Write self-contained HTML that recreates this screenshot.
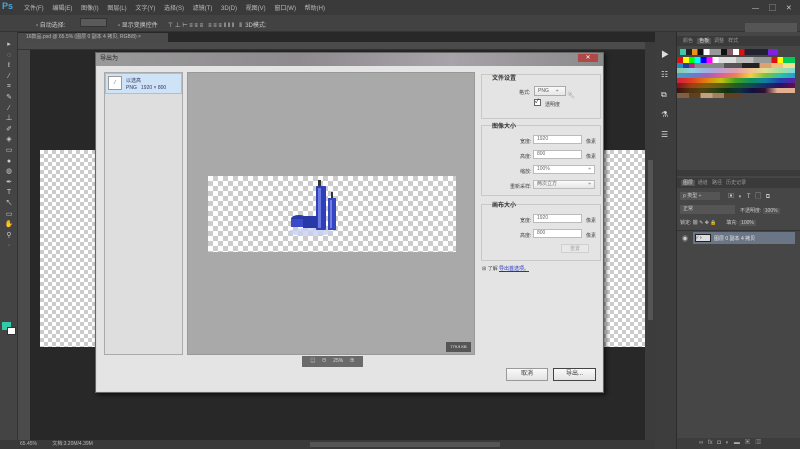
<!DOCTYPE html>
<html><head><meta charset="utf-8"><style>
*{margin:0;padding:0;box-sizing:border-box}
body{width:800px;height:449px;overflow:hidden;background:#282828;font-family:"Liberation Sans","Noto Sans CJK SC",sans-serif;font-size:6px;color:#ccc;position:relative}
.a{position:absolute}
.chk{background-color:#fff;background-image:linear-gradient(45deg,#ccc 25%,transparent 25%,transparent 75%,#ccc 75%),linear-gradient(45deg,#ccc 25%,transparent 25%,transparent 75%,#ccc 75%);background-size:8px 8px;background-position:0 0,4px 4px}
.inp{position:absolute;background:#fff;border:1px solid #bbb;height:9px;font-size:5px;color:#666;padding-left:3px;line-height:7px}
.lbl{position:absolute;font-size:5px;color:#444}
.grp{position:absolute;border:1px solid #c8c8c8;background:#e4e4e4}
.gt{position:absolute;font-size:6px;color:#333;font-weight:bold}
.btn{position:absolute;background:linear-gradient(#fafafa,#e2e2e2);border:1px solid #999;font-size:6px;color:#333;text-align:center;line-height:11px}
</style></head><body>
<!-- menu bar -->
<div class="a" style="left:0;top:0;width:800px;height:15px;background:#3a3a3a"></div>
<div class="a" style="left:2px;top:1px;font-size:9px;color:#4aa3df;font-weight:bold">Ps</div>
<div class="a" style="left:24px;top:3px;font-size:6px;color:#bbb;word-spacing:7px">文件(F) 编辑(E) 图像(I) 图层(L) 文字(Y) 选择(S) 滤镜(T) 3D(D) 视图(V) 窗口(W) 帮助(H)</div>
<div class="a" style="left:752px;top:3px;font-size:7px;color:#ccc;word-spacing:8px">— ▢ ✕</div>
<!-- options bar -->
<div class="a" style="left:0;top:15px;width:800px;height:17px;background:#424242;border-bottom:1px solid #333"></div>
<div class="a" style="left:36px;top:20px;font-size:6px;color:#ccc">▫ 自动选择:</div>
<div class="a" style="left:80px;top:18px;width:27px;height:9px;background:#5a5a5a;border:1px solid #333"></div>
<div class="a" style="left:118px;top:20px;font-size:6px;color:#ccc">▫ 显示变换控件 &nbsp;&nbsp;&nbsp;&nbsp; ⊤ ⊥ ⊢ ≡ ≡ ≡ &nbsp; ≡ ≡ ≡ ‖ ‖ ‖ &nbsp; ⫴ &nbsp;3D模式:</div>
<div class="a" style="left:745px;top:23px;width:52px;height:9px;background:#555"></div>
<!-- tab & ruler -->
<div class="a" style="left:18px;top:33px;width:150px;height:9px;background:#4a4a4a;font-size:5px;color:#bbb;padding-left:8px;line-height:9px">16款品.psd @ 65.5% (图层 0 副本 4 拷贝, RGB/8) ×</div>
<div class="a" style="left:18px;top:42px;width:627px;height:8px;background:#4b4b4b;border-bottom:1px solid #333"></div>
<div class="a" style="left:18px;top:50px;width:12px;height:390px;background:#4b4b4b"></div>
<!-- left toolbar -->
<div class="a" style="left:0;top:32px;width:18px;height:408px;background:#444;border-right:1px solid #333"></div>
<div class="a" style="left:4px;top:40px;width:10px;line-height:10.6px;font-size:7px;color:#ccc;text-align:center">▸<br>◌<br>ℓ<br>⁄<br>⌗<br>✎<br>⁄<br>⊥<br>✐<br>◈<br>▭<br>●<br>◍<br>✒<br>T<br>↖<br>▭<br>✋<br>⚲<br>·</div>
<div class="a" style="left:2px;top:322px;width:9px;height:8px;background:#34c9a8"></div>
<div class="a" style="left:7px;top:327px;width:9px;height:8px;background:#fff;border:1px solid #333"></div>
<!-- canvas checker -->
<div class="a chk" style="left:40px;top:150px;width:57px;height:197px"></div>
<div class="a chk" style="left:598px;top:150px;width:47px;height:197px"></div>
<!-- canvas scrollbar -->
<div class="a" style="left:645px;top:42px;width:10px;height:398px;background:#3c3c3c"></div>
<div class="a" style="left:648px;top:160px;width:5px;height:160px;background:#555"></div>
<!-- status bar -->
<div class="a" style="left:0;top:440px;width:655px;height:9px;background:#3a3a3a;font-size:5px;color:#bbb;padding-left:20px;line-height:9px">65.45% &nbsp;&nbsp;&nbsp;&nbsp;&nbsp;&nbsp;&nbsp;&nbsp;&nbsp; 文档:3.20M/4.39M</div>
<div class="a" style="left:310px;top:442px;width:190px;height:5px;background:#555"></div>
<!-- right panel strip -->
<div class="a" style="left:655px;top:32px;width:145px;height:417px;background:#464646"></div>
<div class="a" style="left:655px;top:32px;width:22px;height:417px;background:#3d3d3d;border-right:1px solid #2c2c2c"></div>
<div class="a" style="left:661px;top:45px;font-size:8px;color:#ddd;line-height:20px">▶<br>☷<br>⧉<br>⚗<br>☰</div>
<!-- swatches panel -->
<div class="a" style="left:677px;top:36px;width:123px;height:10px;background:#3a3a3a;font-size:5px;color:#999;padding-left:6px;line-height:10px">颜色 &nbsp; <span style="background:#555;color:#ddd;padding:0 2px">色板</span> &nbsp;调整 &nbsp; 样式</div>
<div class="a" style="left:680px;top:49px;width:98px;height:6px;background:linear-gradient(90deg,#3cc9a8 0 6%,#222 6% 12%,#f0901c 12% 18%,#111 18% 24%,#fff 24% 30%,#999 30% 42%,#111 42% 48%,#8a5a6a 48% 54%,#fff 54% 60%,#e01010 60% 66%,#223 66% 90%,#8020e0 90%)"></div>
<div class="a" style="left:677px;top:57px;width:118px;height:42px;background:
linear-gradient(90deg,#e01010 0 5%,#ff0 5% 10%,#0f0 10% 15%,#0ff 15% 20%,#00f 20% 25%,#f0f 25% 30%,#fff 30% 35%,#ddd 35% 50%,#bbb 50% 65%,#999 65% 80%,#e01010 80% 85%,#ff0 85% 90%,#0c5 90%) 0 0/100% 6px no-repeat,
linear-gradient(90deg,#2a88c8 0 5%,#2040a0 5% 10%,#c02080 10% 15%,#888 15% 40%,#555 40% 55%,#222 55% 70%,#e0a070 70% 80%,#f0c080 80% 90%,#f0e090 90%) 0 6px/100% 5px no-repeat,
linear-gradient(90deg,#88c8a0,#90d0e0,#a0b0e0,#c0a0d0,#e0a0b0,#f0c090,#e0e090,#a0e0a0,#80d8d8) 0 11px/100% 5px no-repeat,
linear-gradient(90deg,#40a0c0,#6080d0,#a060c0,#e06090,#f08050,#f0d040,#80c040,#30c0a0,#20a0d0) 0 16px/100% 5px no-repeat,
linear-gradient(90deg,#d02040,#e04020,#e08010,#c0c010,#40a020,#109060,#1080a0,#2040b0,#6020a0) 0 21px/100% 5px no-repeat,
linear-gradient(90deg,#801020,#a04010,#806010,#606010,#206020,#105050,#103070,#301060,#601050) 0 26px/100% 5px no-repeat,
linear-gradient(90deg,#401010,#503010,#504010,#304010,#103010,#103040,#101040,#301030,#e0b090 85% 100%) 0 31px/100% 5px no-repeat,
linear-gradient(90deg,#806040 0 10%,#604020 10% 20%,#c0a080 20% 30%,#a08060 30% 40%,#604020 40% 55%,transparent 55%) 0 36px/100% 5px no-repeat"></div>
<!-- layers panel -->
<div class="a" style="left:677px;top:170px;width:123px;height:6px;background:#3a3a3a"></div>
<div class="a" style="left:677px;top:178px;width:123px;height:10px;background:#3a3a3a;font-size:5px;color:#999;padding-left:4px;line-height:10px"><span style="background:#555;color:#ddd;padding:0 2px">图层</span> &nbsp;通道 &nbsp; 路径 &nbsp; 历史记录</div>
<div class="a" style="left:680px;top:192px;width:40px;height:8px;background:#555;font-size:5px;color:#ccc;padding-left:3px;line-height:8px">ρ 类型 ÷</div>
<div class="a" style="left:728px;top:191px;font-size:6px;color:#ccc;word-spacing:3px">▣ ◐ T ▢ ⧉</div>
<div class="a" style="left:680px;top:205px;width:55px;height:9px;background:#555;font-size:5px;color:#ccc;padding-left:3px;line-height:9px">正常</div>
<div class="a" style="left:740px;top:207px;font-size:5px;color:#ccc">不透明度: <span style="background:#555;padding:0 2px">100%</span></div>
<div class="a" style="left:680px;top:219px;font-size:5px;color:#ccc">锁定: ▩ ✎ ✥ 🔒 &nbsp;&nbsp;&nbsp;&nbsp;&nbsp;&nbsp;填充: <span style="background:#555;padding:0 2px">100%</span></div>
<div class="a" style="left:677px;top:230px;width:123px;height:1px;background:#333"></div>
<div class="a" style="left:693px;top:232px;width:102px;height:12px;background:#6a7686"></div>
<div class="a" style="left:682px;top:234px;font-size:6px;color:#ccc">◉</div>
<div class="a" style="left:695px;top:234px;width:16px;height:8px;background:#ddd;border:1px solid #222;font-size:4px;color:#222;line-height:6px">ﾃﾞﾄ</div>
<div class="a" style="left:714px;top:235px;font-size:5px;color:#e8e8e8">图层 0 副本 4 拷贝</div>
<div class="a" style="left:677px;top:438px;width:123px;height:11px;background:#3d3d3d;font-size:6px;color:#aaa;padding-left:22px;line-height:11px;word-spacing:3px">∞ fx ◘ ◐ ▬ ▣ ▥</div>
<!-- dialog -->
<div class="a" style="left:95px;top:52px;width:509px;height:341px;background:#dcdcdc;border:1px solid #666;box-shadow:2px 2px 4px rgba(0,0,0,.6)"></div>
<div class="a" style="left:96px;top:53px;width:507px;height:13px;background:linear-gradient(90deg,#9a9a9a,#8e8a8e 40%,#a8a2aa 70%,#8a8a8a);font-size:6px;color:#222;padding-left:4px;line-height:13px">导出为</div>
<div class="a" style="left:578px;top:54px;width:20px;height:8px;background:#b04848;color:#fff;font-size:6px;text-align:center;line-height:8px">✕</div>
<div class="a" style="left:97px;top:66px;width:505px;height:325px;background:#e4e4e4"></div>
<!-- list -->
<div class="a" style="left:104px;top:72px;width:79px;height:283px;background:#dedede;border:1px solid #aaa"></div>
<div class="a" style="left:105px;top:73px;width:77px;height:21px;background:#cfe3f6;border:1px solid #9bc4ea"></div>
<div class="a" style="left:108px;top:76px;width:14px;height:14px;background:#fff;border:1px solid #999;font-size:5px;color:#555;text-align:center;line-height:12px">⁄</div>
<div class="a" style="left:126px;top:77px;font-size:5px;color:#336">以选高</div>
<div class="a" style="left:126px;top:85px;font-size:5px;color:#336">PNG &nbsp; 1920 × 800</div>
<!-- preview -->
<div class="a" style="left:187px;top:72px;width:288px;height:283px;background:#a9a9a9;border:1px solid #999"></div>
<div class="a chk" style="left:208px;top:176px;width:248px;height:76px;background-size:10px 10px;background-position:0 0,5px 5px"></div>
<svg class="a" style="left:285px;top:176px" width="80" height="70" viewBox="0 0 80 70">
<ellipse cx="25" cy="56" rx="22" ry="4" fill="#c8d0f0" opacity=".8"/>
<rect x="33" y="4" width="3" height="6" fill="#333"/>
<rect x="31" y="10" width="10" height="44" rx="1" fill="#2f3fb8"/>
<rect x="33" y="12" width="3" height="40" fill="#6a7ae0"/>
<rect x="46" y="16" width="2" height="6" fill="#333"/>
<rect x="43" y="22" width="8" height="32" fill="#3547c0"/>
<rect x="45" y="24" width="2" height="28" fill="#7080e0"/>
<ellipse cx="14" cy="43" rx="8" ry="4" fill="#2a3aa8"/>
<rect x="6" y="43" width="16" height="8" fill="#3a4ac8"/>
<rect x="18" y="40" width="14" height="12" fill="#2838a8"/>
</svg>
<div class="a" style="left:446px;top:342px;width:25px;height:10px;background:#555;font-size:4px;color:#eee;text-align:center;line-height:10px">779.9 KB</div>
<div class="a" style="left:302px;top:356px;width:61px;height:11px;background:#6a6a6a;font-size:5px;color:#ddd;text-align:center;line-height:11px;word-spacing:5px">▤ ⊖ 25% ⊕</div>
<!-- settings groups -->
<div class="grp" style="left:481px;top:74px;width:120px;height:45px"></div>
<div class="gt" style="left:492px;top:73px">文件设置</div>
<div class="lbl" style="left:519px;top:89px">格式:</div>
<div class="a" style="left:534px;top:86px;width:32px;height:10px;background:linear-gradient(#fafafa,#e6e6e6);border:1px solid #aaa;font-size:5px;color:#555;padding-left:3px;line-height:8px">PNG &nbsp;&nbsp;&nbsp;&nbsp;÷</div>
<div class="a" style="left:534px;top:99px;width:7px;height:7px;background:#fff;border:1px solid #666;font-size:6px;color:#222;line-height:5px">✓</div>
<div class="lbl" style="left:545px;top:101px">透明度</div>
<div class="a" style="left:567px;top:90px;font-size:8px;color:#fff;text-shadow:0 0 1px #000">↖</div>

<div class="grp" style="left:481px;top:125px;width:120px;height:71px"></div>
<div class="gt" style="left:492px;top:121px">图像大小</div>
<div class="lbl" style="left:520px;top:138px">宽度:</div><div class="inp" style="left:533px;top:135px;width:49px">1920</div><div class="lbl" style="left:586px;top:138px">像素</div>
<div class="lbl" style="left:520px;top:153px">高度:</div><div class="inp" style="left:533px;top:150px;width:49px">800</div><div class="lbl" style="left:586px;top:153px">像素</div>
<div class="lbl" style="left:520px;top:168px">缩放:</div><div class="inp" style="left:533px;top:165px;width:62px">100% <span style="float:right;padding-right:3px">÷</span></div>
<div class="lbl" style="left:510px;top:183px">重新采样:</div><div class="inp" style="left:533px;top:180px;width:62px;background:linear-gradient(#fafafa,#e6e6e6)">两次立方 <span style="float:right;padding-right:3px">÷</span></div>

<div class="grp" style="left:481px;top:204px;width:120px;height:57px"></div>
<div class="gt" style="left:492px;top:200px">画布大小</div>
<div class="lbl" style="left:520px;top:217px">宽度:</div><div class="inp" style="left:533px;top:214px;width:49px">1920</div><div class="lbl" style="left:586px;top:217px">像素</div>
<div class="lbl" style="left:520px;top:232px">高度:</div><div class="inp" style="left:533px;top:229px;width:49px">800</div><div class="lbl" style="left:586px;top:232px">像素</div>
<div class="a" style="left:561px;top:244px;width:28px;height:9px;background:#e8e8e8;border:1px solid #d0d0d0;font-size:5px;color:#aaa;text-align:center">重置</div>
<div class="lbl" style="left:482px;top:265px">⊞ 了解 <span style="color:#2030c0;text-decoration:underline">导出首选项。</span></div>
<div class="btn" style="left:506px;top:368px;width:42px;height:13px">取消</div>
<div class="btn" style="left:553px;top:368px;width:43px;height:13px;border:1px solid #444">导出...</div>
</body></html>
